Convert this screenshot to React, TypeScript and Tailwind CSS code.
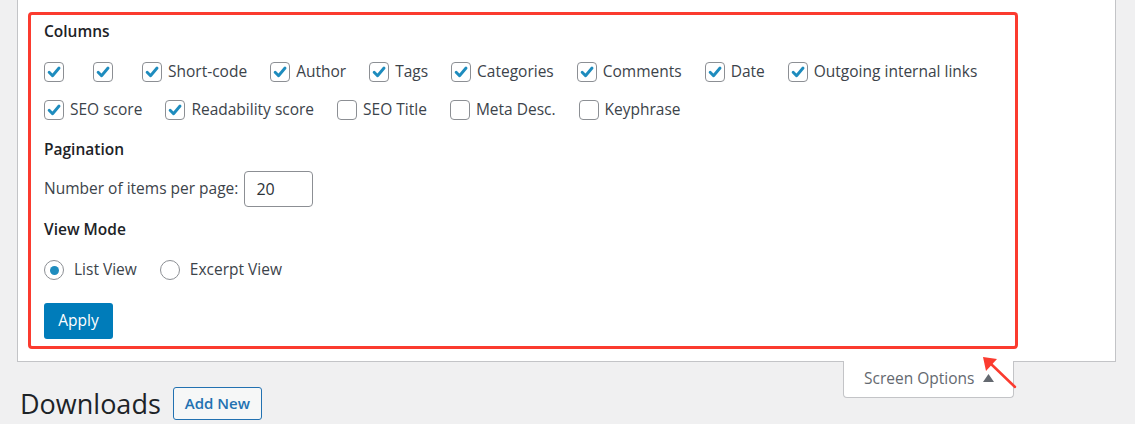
import React from 'react';

const font = { fontFamily: '"Open Sans", "Noto Sans", Arial, sans-serif' };

function Check({ label, checked = true }: { label: string; checked?: boolean }) {
  return (
    <label className="flex items-center mr-[23px]">
      <span className="w-[20px] h-[20px] rounded-[4px] border border-[#8c8f94] bg-white flex items-center justify-center shrink-0">
        {checked && (
          <svg width="18" height="18" viewBox="0 0 20 20">
            <path d="M4.6 10.2 L8.4 14.2 L15.6 5.6" fill="none" stroke="#1e8cbe" strokeWidth="3.2" strokeLinecap="round" strokeLinejoin="round" />
          </svg>
        )}
      </span>
      <span className="ml-[6px] whitespace-nowrap">{label}</span>
    </label>
  );
}

function Radio({ label, checked = false }: { label: string; checked?: boolean }) {
  return (
    <label className="flex items-center mr-[23px]">
      <span className="w-[20px] h-[20px] rounded-full border border-[#8c8f94] bg-white flex items-center justify-center shrink-0">
        {checked && <span className="w-[9px] h-[9px] rounded-full bg-[#1e8cbe]" />}
      </span>
      <span className="ml-[10px] whitespace-nowrap">{label}</span>
    </label>
  );
}

export default function App() {
  const row1 = ['', '', 'Short-code', 'Author', 'Tags', 'Categories', 'Comments', 'Date', 'Outgoing internal links'];

  return (
    <div style={font} className="relative w-[1135px] h-[424px] overflow-hidden bg-[#f0f0f1] text-[#3c434a] text-[15.5px]">
      {/* screen options panel */}
      <div className="ml-[17px] w-[1099px] bg-white border-x border-b border-[#c3c4c7] pt-[12px] pb-[12px]">
        <div className="ml-[10px] w-[990px] h-[337px] border-[3px] border-[#fb3b2f] rounded-[4px] px-[13px] pt-[6px]">
          <div className="h-[22px] flex items-center font-semibold text-[#1d2327]">Columns</div>
          <div className="mt-[10px] h-[38px] flex items-center">
            {row1.map((l, i) => (
              <Check key={i} label={l} />
            ))}
          </div>
          <div className="h-[38px] flex items-center">
            <Check label="SEO score" />
            <Check label="Readability score" />
            <Check label="SEO Title" checked={false} />
            <Check label="Meta Desc." checked={false} />
            <Check label="Keyphrase" checked={false} />
          </div>
          <div className="mt-[10px] h-[22px] flex items-center font-semibold text-[#1d2327]">Pagination</div>
          <div className="mt-[10px] h-[36px] flex items-center">
            <span>Number of items per page:</span>
            <span className="ml-[6px] w-[69px] h-[36px] border border-[#8c8f94] rounded-[4px] flex items-center pl-[11px] text-[#2c3338] text-[16px]">20</span>
          </div>
          <div className="mt-[12px] h-[22px] flex items-center font-semibold text-[#1d2327]">View Mode</div>
          <div className="mt-[10px] h-[38px] flex items-center">
            <Radio label="List View" checked />
            <Radio label="Excerpt View" />
          </div>
          <button className="mt-[14px] w-[69px] h-[36px] bg-[#007cba] text-white rounded-[3px] text-[15.5px]">Apply</button>
        </div>
      </div>

      {/* heading row + tab */}
      <div className="flex justify-between items-start">
        <div className="ml-[20px] mt-[25px] flex items-center">
          <h1 className="text-[27px] font-normal text-[#1d2327] leading-none">Downloads</h1>
          <button className="ml-[12px] h-[33px] px-[11px] border border-[#2271b1] rounded-[3px] bg-[#f6f7f7] text-[#2271b1] font-semibold text-[15px]">
            Add New
          </button>
        </div>
        <div className="-mt-px mr-[121px] w-[171px] h-[37px] bg-white border-x border-b border-[#c3c4c7] rounded-b-[4px] flex items-center pl-[20px] text-[#646970] text-[15.5px]">
          Screen Options
          <svg className="ml-[9px] mb-[3px]" width="11" height="8" viewBox="0 0 11 8">
            <polygon points="5.5,0 11,8 0,8" fill="#646970" />
          </svg>
        </div>
      </div>

      {/* annotation arrow */}
      <svg className="absolute left-[978px] top-[350px]" width="45" height="45" viewBox="0 0 45 45">
        <line x1="12" y1="13" x2="37" y2="37" stroke="#fb3b2f" strokeWidth="2.5" strokeLinecap="round" />
        <polygon points="5,7 19,9 8,21" fill="#fb3b2f" />
      </svg>
    </div>
  );
}
